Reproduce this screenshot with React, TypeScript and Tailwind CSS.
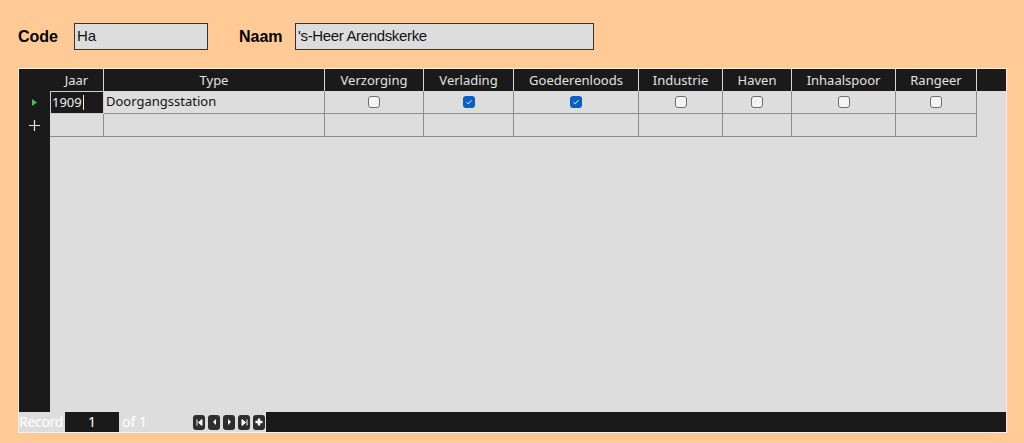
import React from 'react';

const columns = [
  { label: 'Jaar', w: 'w-[54px]' },
  { label: 'Type', w: 'w-[221px]' },
  { label: 'Verzorging', w: 'w-[99px]' },
  { label: 'Verlading', w: 'w-[90px]' },
  { label: 'Goederenloods', w: 'w-[125px]' },
  { label: 'Industrie', w: 'w-[84px]' },
  { label: 'Haven', w: 'w-[69px]' },
  { label: 'Inhaalspoor', w: 'w-[104px]' },
  { label: 'Rangeer', w: 'w-[81px]' },
];

const checks = [false, true, true, false, false, false, false];

const Check = ({ on }: { on: boolean }) =>
  on ? (
    <span className="w-[12px] h-[12px] rounded-[3px] bg-[#0b5fc4] flex items-center justify-center">
      <svg width="8" height="8" viewBox="0 0 8 8">
        <path d="M1.5 4.2 L3.2 5.8 L6.6 2.2" fill="none" stroke="#fff" strokeWidth="1" />
      </svg>
    </span>
  ) : (
    <span className="w-[12px] h-[12px] rounded-[3px] bg-[#f4f4f4] border border-[#6e6e6e]" />
  );

const NavBtn = ({ children }: { children: React.ReactNode }) => (
  <span className="w-[12px] h-[15px] rounded-[3px] bg-[#2e2e2e] flex items-center justify-center">
    {children}
  </span>
);

export default function App() {
  return (
    <div className="w-[1024px] h-[443px] bg-[#ffca96] overflow-hidden font-['Liberation_Sans',sans-serif]">
      {/* top form */}
      <div className="flex items-center pt-[23px] pl-[18px] h-[50px]">
        <span className="text-[16px] font-bold text-black w-[56px]">Code</span>
        <div className="w-[134px] h-[27px] bg-[#dddddd] border border-[#333] flex items-center pl-[2px] text-[15px] text-[#111]">
          Ha
        </div>
        <span className="text-[16px] font-bold text-black ml-[31px] w-[56px]">Naam</span>
        <div className="w-[299px] h-[27px] bg-[#dddddd] border border-[#333] flex items-center pl-[2px] text-[15px] text-[#111] tracking-[-0.35px]">
          's-Heer Arendskerke
        </div>
      </div>

      {/* grid */}
      <div className="ml-[18px] mt-[18px] w-[989px] h-[365px] border border-[#f6efe6] flex flex-col font-['Noto_Sans',sans-serif]">
        <div className="flex flex-1">
          {/* selector column */}
          <div className="w-[31px] bg-[#1a1a1a] flex flex-col">
            <div className="h-[22px]" />
            <div className="h-[23px] flex items-center justify-center">
              <svg width="5" height="7" viewBox="0 0 5 7">
                <path d="M0 0 L5 3.5 L0 7 Z" fill="#3fbf5a" />
              </svg>
            </div>
            <div className="h-[23px] flex items-center justify-center">
              <svg width="11" height="11" viewBox="0 0 11 11">
                <path d="M5.5 0 V11 M0 5.5 H11" stroke="#e8e8e8" strokeWidth="1.2" />
              </svg>
            </div>
          </div>
          {/* data */}
          <div className="flex-1 flex flex-col bg-[#dddddd]">
            <div className="h-[22px] flex bg-[#1a1a1a]">
              {columns.map((c) => (
                <div
                  key={c.label}
                  className={`${c.w} border-r border-[#d8d8d8] flex items-center justify-center text-[13px] text-[#e2e2e2] leading-none`}
                >
                  {c.label}
                </div>
              ))}
              <div className="flex-1" />
            </div>
            <div className="flex h-[23px]">
              <div className="w-[54px] bg-[#1a1a1a] border border-[#cfcfcf] flex items-center text-[13px] text-[#eee] leading-none pl-[1px]">
                1909<span className="w-[1px] h-[15px] bg-[#eee] ml-[1px]" />
              </div>
              <div className="w-[221px] border-r border-b border-[#8c8c8c] flex items-center pl-[2px] text-[13px] text-[#111]">
                Doorgangsstation
              </div>
              {columns.slice(2).map((c, i) => (
                <div key={c.label} className={`${c.w} border-r border-b border-[#8c8c8c] flex items-center justify-center`}>
                  <Check on={checks[i]} />
                </div>
              ))}
            </div>
            <div className="flex h-[23px]">
              {columns.map((c) => (
                <div key={c.label} className={`${c.w} border-r border-b border-[#8c8c8c]`} />
              ))}
            </div>
            <div className="flex-1" />
          </div>
        </div>
        {/* footer */}
        <div className="h-[20px] bg-[#1a1a1a] flex items-center text-[14px] leading-none">
          <div className="w-[46px] h-full bg-[#dddddd] text-white flex items-center overflow-hidden tracking-[-0.3px]">Record</div>
          <div className="w-[54px] h-full flex items-center justify-center text-white">1</div>
          <div className="w-[73px] h-full bg-[#dddddd] text-white flex items-center pl-[3px]">of 1</div>
          <div className="w-[74px] h-full bg-[#dddddd] flex items-center gap-[3px] pl-[1px]">
            <NavBtn>
              <svg width="7" height="7" viewBox="0 0 7 7"><path d="M1 0.5 V6.5 M6 0.5 L2.5 3.5 L6 6.5 Z" stroke="#fff" fill="#fff" strokeWidth="1" /></svg>
            </NavBtn>
            <NavBtn>
              <svg width="5" height="6" viewBox="0 0 5 6"><path d="M4 0 L1 3 L4 6 Z" fill="#fff" /></svg>
            </NavBtn>
            <NavBtn>
              <svg width="5" height="6" viewBox="0 0 5 6"><path d="M1 0 L4 3 L1 6 Z" fill="#fff" /></svg>
            </NavBtn>
            <NavBtn>
              <svg width="7" height="7" viewBox="0 0 7 7"><path d="M6 0.5 V6.5 M1 0.5 L4.5 3.5 L1 6.5 Z" stroke="#fff" fill="#fff" strokeWidth="1" /></svg>
            </NavBtn>
            <NavBtn>
              <svg width="8" height="8" viewBox="0 0 8 8"><path d="M4 0.5 V7.5 M0.5 4 H7.5" stroke="#fff" strokeWidth="2.4" /></svg>
            </NavBtn>
          </div>
          <div className="flex-1" />
        </div>
      </div>
    </div>
  );
}
